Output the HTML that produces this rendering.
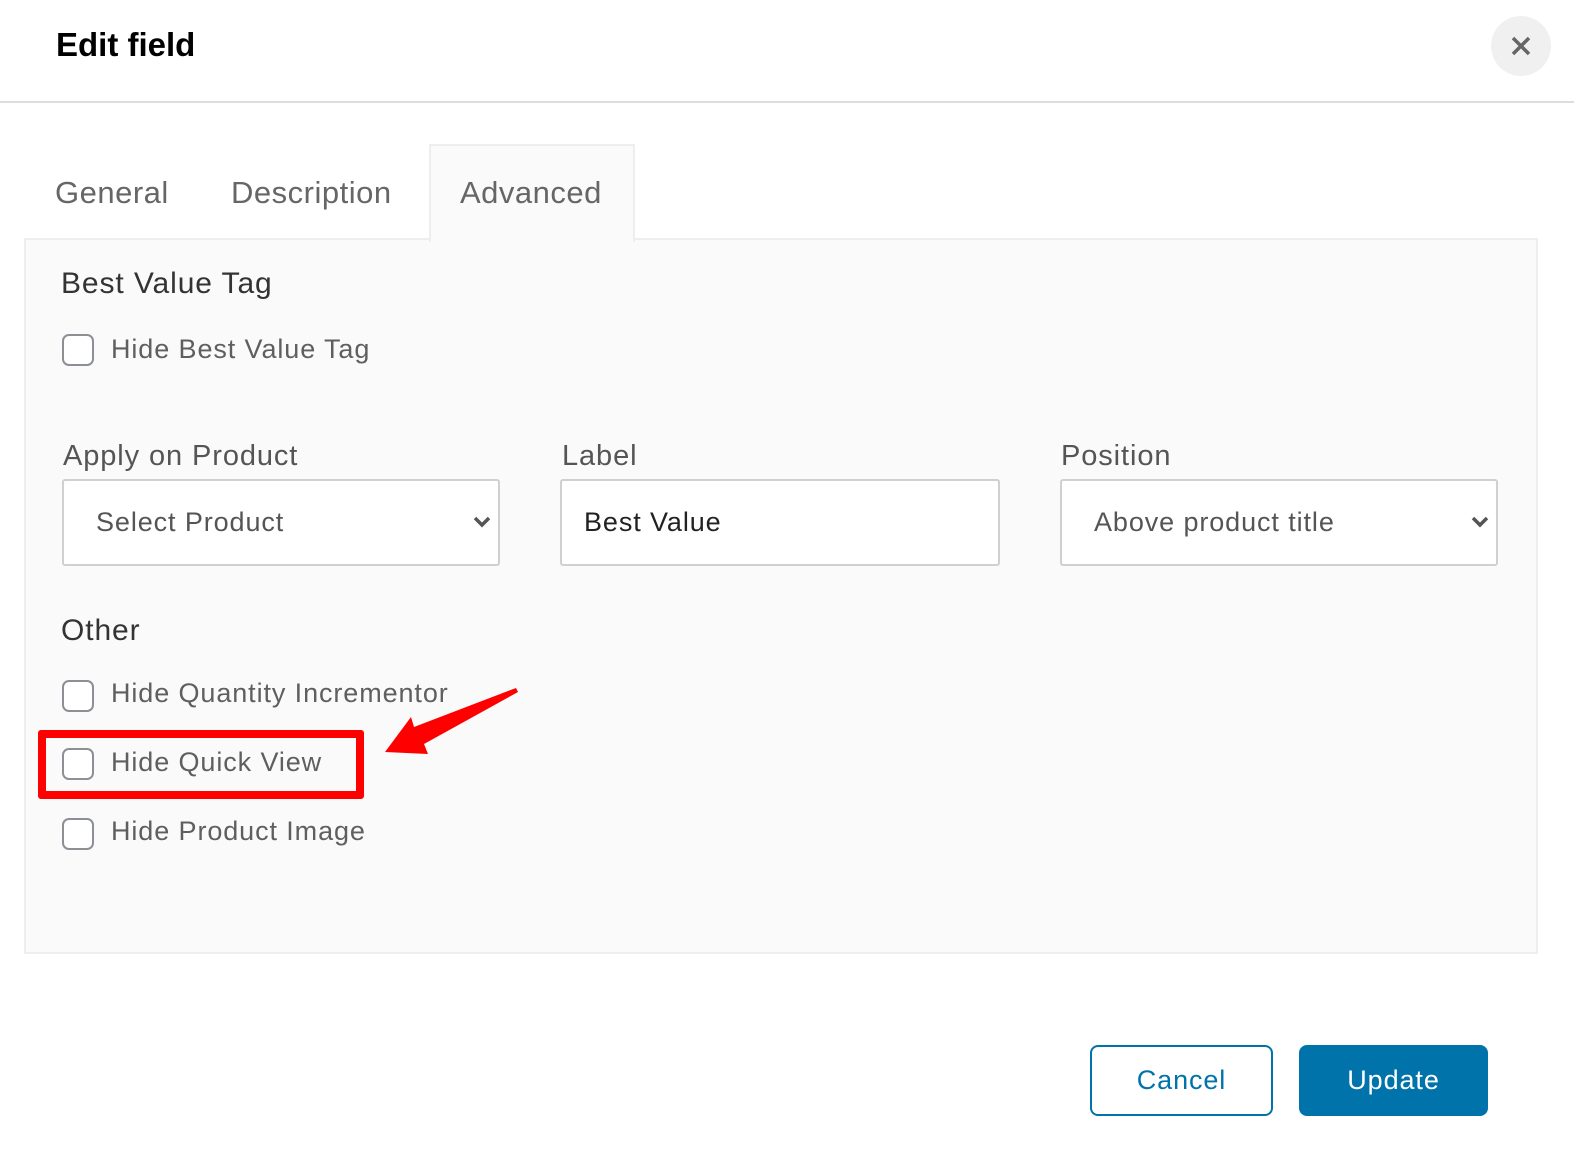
<!DOCTYPE html>
<html><head><meta charset="utf-8"><style>
*{box-sizing:border-box;margin:0;padding:0}
body{width:1574px;height:1152px;background:#fff;font-family:"Liberation Sans",sans-serif;position:relative;overflow:hidden;color:#555}
.a{position:absolute}
.cb{position:absolute;width:32px;height:32px;border:2px solid #8c8f94;border-radius:7px;background:#fff}
.t{position:absolute;font-size:27px;color:#5f5f5f;white-space:nowrap;letter-spacing:0.9px}
.box{position:absolute;height:87px;border:2px solid #d0d0d0;border-radius:3px;background:#fff;font-size:27px;color:#555;padding-left:32px;line-height:83px;letter-spacing:0.9px}
</style></head><body>
<div class="a" style="left:56px;top:26px;font-size:33px;font-weight:bold;color:#000">Edit field</div>
<div class="a" style="left:1491px;top:16px;width:60px;height:60px;border-radius:50%;background:#f0f0f0"></div>
<svg class="a" style="left:1510px;top:35px" width="22" height="22"><path d="M3 3L19 19M19 3L3 19" stroke="#666" stroke-width="3.5"/></svg>
<div class="a" style="left:0;top:101px;width:1574px;height:2px;background:#ddd"></div>
<div class="a" style="left:24px;top:238px;width:1514px;height:716px;background:#fafafa;border:2px solid #eee"></div>
<div class="a" style="left:429px;top:144px;width:206px;height:98px;background:#fafafa;border:2px solid #eee;border-bottom:none"></div>
<div class="t" style="left:55px;top:175px;font-size:31px;color:#666;letter-spacing:0.5px">General</div>
<div class="t" style="left:231px;top:175px;font-size:31px;color:#666;letter-spacing:0.5px">Description</div>
<div class="t" style="left:460px;top:175px;font-size:31px;color:#666;letter-spacing:0.5px">Advanced</div>
<div class="t" style="left:61px;top:267px;font-size:30px;color:#333">Best Value Tag</div>
<div class="cb" style="left:62px;top:334px"></div>
<div class="t" style="left:111px;top:334px">Hide Best Value Tag</div>
<div class="t" style="left:63px;top:440px;font-size:29px;color:#555">Apply on Product</div>
<div class="t" style="left:562px;top:440px;font-size:29px;color:#555">Label</div>
<div class="t" style="left:1061px;top:440px;font-size:29px;color:#555">Position</div>
<div class="box" style="left:62px;top:479px;width:438px">Select Product</div>
<div class="box" style="left:560px;top:479px;width:440px;color:#222;padding-left:22px">Best Value</div>
<div class="box" style="left:1060px;top:479px;width:438px">Above product title</div>
<svg class="a" style="left:472px;top:514px" width="20" height="16"><path d="M3 4L10 11L17 4" stroke="#555" stroke-width="3.5" fill="none"/></svg>
<svg class="a" style="left:1470px;top:514px" width="20" height="16"><path d="M3 4L10 11L17 4" stroke="#555" stroke-width="3.5" fill="none"/></svg>
<div class="t" style="left:61px;top:614px;font-size:30px;color:#333">Other</div>
<div class="cb" style="left:62px;top:680px"></div>
<div class="t" style="left:111px;top:678px">Hide Quantity Incrementor</div>
<div class="cb" style="left:62px;top:748px"></div>
<div class="t" style="left:111px;top:747px">Hide Quick View</div>
<div class="cb" style="left:62px;top:818px"></div>
<div class="t" style="left:111px;top:816px">Hide Product Image</div>
<div class="a" style="left:38px;top:730px;width:326px;height:69px;border:8px solid #f00;border-radius:3px"></div>
<svg class="a" style="left:0;top:0" width="600" height="800"><polygon points="516,688 414,727 411,717 385,752 428,754 424,744 518,692" fill="#f00"/></svg>
<div class="a" style="left:1090px;top:1045px;width:183px;height:71px;border:2px solid #0073aa;border-radius:8px;color:#0073aa;font-size:27px;text-align:center;line-height:67px;letter-spacing:0.9px">Cancel</div>
<div class="a" style="left:1299px;top:1045px;width:189px;height:71px;background:#0073aa;border-radius:8px;color:#fff;font-size:27px;text-align:center;line-height:71px;letter-spacing:0.9px">Update</div>
</body></html>
